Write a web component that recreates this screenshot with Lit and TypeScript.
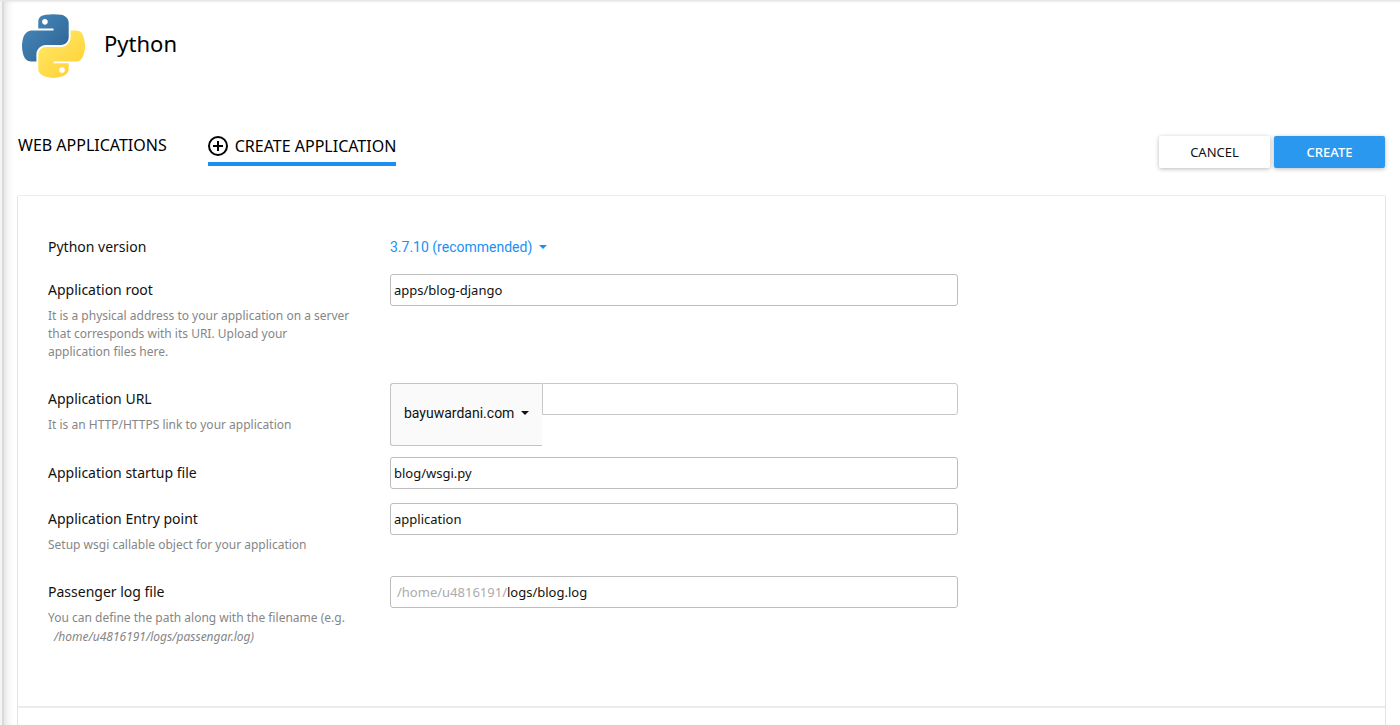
import { LitElement, html, css, svg } from "lit";
import { customElement } from "lit/decorators.js";

const caret = html`<svg class="caret" viewBox="0 0 8 4" aria-hidden="true">
  <path d="M0 0h8L4 4z" fill="currentColor"></path>
</svg>`;

const logo = svg`<svg class="logo" viewBox="0 0 111 112" aria-hidden="true">
  <defs>
    <linearGradient id="blue" x1="0" y1="0" x2="0.8" y2="0.8">
      <stop offset="0" stop-color="#4b8bbe"></stop>
      <stop offset="1" stop-color="#306998"></stop>
    </linearGradient>
    <linearGradient id="yellow" x1="0.8" y1="0.8" x2="0.3" y2="0.2">
      <stop offset="0" stop-color="#ffd43b"></stop>
      <stop offset="1" stop-color="#ffe45e"></stop>
    </linearGradient>
  </defs>
  <path fill="url(#blue)" d="M54.919 0C50.335.022 45.958.413 42.106 1.095 30.76 3.099 28.7 7.295 28.7 15.032v10.219h26.813v3.406H18.638c-7.793 0-14.616 4.684-16.75 13.594-2.462 10.213-2.571 16.586 0 27.25 1.906 7.938 6.457 13.594 14.25 13.594h9.218v-12.25c0-8.85 7.657-16.657 16.75-16.657h26.782c7.455 0 13.406-6.138 13.406-13.625V15.032c0-7.266-6.13-12.725-13.406-13.937C64.282.328 59.502-.02 54.919 0zm-14.5 8.22c2.769 0 5.031 2.298 5.031 5.125 0 2.816-2.262 5.094-5.031 5.094-2.78 0-5.032-2.278-5.032-5.094 0-2.827 2.252-5.125 5.032-5.125z"></path>
  <path fill="url(#yellow)" d="M85.638 28.657v11.906c0 9.231-7.826 17-16.75 17H42.106c-7.336 0-13.406 6.279-13.406 13.625v25.532c0 7.266 6.318 11.54 13.406 13.625 8.487 2.495 16.626 2.946 26.782 0 6.75-1.955 13.406-5.888 13.406-13.625V86.5H55.512v-3.406H95.7c7.793 0 10.696-5.435 13.406-13.594 2.8-8.399 2.68-16.475 0-27.25-1.925-7.757-5.604-13.593-13.406-13.593zM70.575 93.313c2.78 0 5.031 2.278 5.031 5.094 0 2.827-2.251 5.125-5.031 5.125-2.77 0-5.031-2.298-5.031-5.125 0-2.816 2.262-5.094 5.031-5.094z"></path>
</svg>`;

@customElement("app-root")
export class AppRoot extends LitElement {
  static styles = css`
    :host {
      display: block;
      box-sizing: border-box;
      min-height: 100vh;
      background: #fff;
      border-top: 1px solid #e6e6e6;
      color: #111;
      font-family: "Noto Sans", sans-serif;
      font-size: 14px;
      line-height: 20px;
    }
    *, *::before, *::after {
      box-sizing: border-box;
    }
    .page {
      display: flex;
      flex-direction: column;
      min-height: calc(100vh - 1px);
      margin-left: 2px;
      border-left: 2px solid #dadada;
      padding: 13px 14px 0;
      box-shadow: inset 8px 0 8px -6px #ddd, inset 0 3px 3px -3px #ddd, -2px 0 0 #f4f4f4;
    }
    .brand {
      display: flex;
      align-items: center;
      gap: 19px;
      padding-left: 4px;
    }
    .logo {
      width: 63px;
      height: 64px;
    }
    .title {
      margin: 0;
      padding-bottom: 6px;
      font-size: 22px;
      line-height: 30px;
      font-weight: 400;
      color: #000;
    }
    .bar {
      display: flex;
      justify-content: space-between;
      align-items: flex-start;
      margin-top: 54px;
      padding-right: 1px;
    }
    .tabs {
      display: flex;
      gap: 41px;
      align-items: flex-start;
      padding-top: 1px;
    }
    .tab {
      display: flex;
      align-items: center;
      gap: 7px;
      height: 33px;
      padding-bottom: 5px;
      border-bottom: 4px solid transparent;
      color: #000;
      font-size: 16px;
      line-height: 24px;
      text-decoration: none;
    }
    .tab.active {
      padding-bottom: 3px;
      border-color: #1a90f3;
    }
    .plus {
      width: 20px;
      height: 20px;
    }
    .actions {
      display: flex;
      gap: 4px;
      padding-top: 4px;
    }
    .btn {
      width: 111px;
      height: 32px;
      padding: 0;
      border: 0;
      border-radius: 2px;
      background: #fff;
      color: #111;
      font: 13px/20px "Noto Sans", sans-serif;
      box-shadow: 0 1px 4px rgba(0, 0, 0, 0.28);
    }
    .btn.primary {
      background: #2b98f0;
      color: #fff;
      font-weight: 500;
    }
    .panel {
      display: flex;
      flex: 1;
      flex-direction: column;
      margin-top: 27px;
      margin-left: -1px;
      border: 1px solid #e4e4e4;
      border-top-color: #ececec;
      border-bottom: 0;
      border-radius: 2px 2px 0 0;
    }
    .form {
      display: flex;
      flex-direction: column;
      gap: 14px;
      padding: 38px 30px 51px;
      border-bottom: 2px solid #ececec;
    }
    .row {
      display: grid;
      grid-template-columns: 302px minmax(0, 568px);
      column-gap: 40px;
      align-items: start;
    }
    .name {
      display: block;
      padding: 6px 0;
    }
    .short {
      padding: 3px 0;
    }
    .help {
      margin: 1px 0 8px;
      color: #868686;
      font-size: 12px;
      line-height: 18px;
    }
    .example {
      display: block;
      padding-left: 6px;
      line-height: 20px;
    }
    .field {
      width: 100%;
      height: 32px;
      padding: 0 3px 1px;
      border: 1px solid #bdbdbd;
      border-radius: 3px;
      background: #fff;
      color: #111;
      font: 13px/20px "Noto Sans", sans-serif;
      outline: 0;
    }
    .pick {
      display: inline-grid;
      grid-template-columns: auto;
      align-items: center;
      justify-self: start;
      color: #111;
    }
    .pick > * {
      grid-area: 1 / 1;
    }
    .pick select {
      appearance: none;
      height: 26px;
      padding: 0 14px 0 0;
      border: 0;
      background: transparent;
      color: inherit;
      font: 14px/20px Roboto, sans-serif;
    }
    .pick.link {
      color: #1a90f3;
    }
    .caret {
      width: 8px;
      height: 4px;
      justify-self: end;
      pointer-events: none;
    }
    .combo {
      display: flex;
      align-items: flex-start;
      margin-bottom: -3px;
    }
    .combo .pick {
      flex: none;
      height: 63px;
      padding: 0 13px 3px;
      border: 1px solid #c4c4c4;
      border-right: 0;
      border-radius: 3px 0 0 3px;
      background: #fafafa;
    }
    .combo .field {
      flex: 1;
      min-width: 0;
      border-color: #c8c8c8;
      border-radius: 0 3px 3px 0;
    }
    .group {
      display: flex;
      align-items: center;
      padding-left: 6px;
    }
    .prefix {
      color: #ababab;
    }
    .inner {
      flex: 1;
      min-width: 0;
      padding: 0;
      border: 0;
      outline: 0;
      background: transparent;
      color: #111;
      font: inherit;
    }
  `;

  render() {
    return html`
      <main class="page">
        <header class="brand">${logo}<h1 class="title">Python</h1></header>
        <div class="bar">
          <nav class="tabs">
            <a class="tab" href="#list">WEB APPLICATIONS</a>
            <a class="tab active" href="#create">
              <svg class="plus" viewBox="0 0 20 20" fill="none" stroke="currentColor" stroke-width="2" aria-hidden="true">
                <circle cx="10" cy="10" r="9"></circle>
                <path d="M10 5v10M5 10h10"></path>
              </svg>
              <span>CREATE APPLICATION</span>
            </a>
          </nav>
          <div class="actions">
            <button class="btn" type="button">CANCEL</button>
            <button class="btn primary" type="submit" form="app">CREATE</button>
          </div>
        </div>
        <section class="panel">
          <form class="form" id="app" @submit=${(e: Event) => e.preventDefault()}>
            <div class="row">
              <label class="name short" for="version">Python version</label>
              <div class="pick link">
                <select id="version"><option>3.7.10 (recommended)</option></select>
                ${caret}
              </div>
            </div>
            <div class="row">
              <div>
                <label class="name" for="root">Application root</label>
                <p class="help">It is a physical address to your application on a server that corresponds with its URI. Upload your application files here.</p>
              </div>
              <input class="field" id="root" type="text" value="apps/blog-django" />
            </div>
            <div class="row">
              <div>
                <label class="name" for="url">Application URL</label>
                <p class="help">It is an HTTP/HTTPS link to your application</p>
              </div>
              <div class="combo">
                <div class="pick">
                  <select aria-label="Domain"><option>bayuwardani.com</option></select>
                  ${caret}
                </div>
                <input class="field" id="url" type="text" />
              </div>
            </div>
            <div class="row">
              <label class="name" for="startup">Application startup file</label>
              <input class="field" id="startup" type="text" value="blog/wsgi.py" />
            </div>
            <div class="row">
              <div>
                <label class="name" for="entry">Application Entry point</label>
                <p class="help">Setup wsgi callable object for your application</p>
              </div>
              <input class="field" id="entry" type="text" value="application" />
            </div>
            <div class="row">
              <div>
                <label class="name" for="log">Passenger log file</label>
                <p class="help">You can define the path along with the filename (e.g. <em class="example">/home/u4816191/logs/passengar.log)</em></p>
              </div>
              <div class="field group">
                <span class="prefix">/home/u4816191/</span>
                <input class="inner" id="log" type="text" value="logs/blog.log" />
              </div>
            </div>
          </form>
        </section>
      </main>
    `;
  }
}
